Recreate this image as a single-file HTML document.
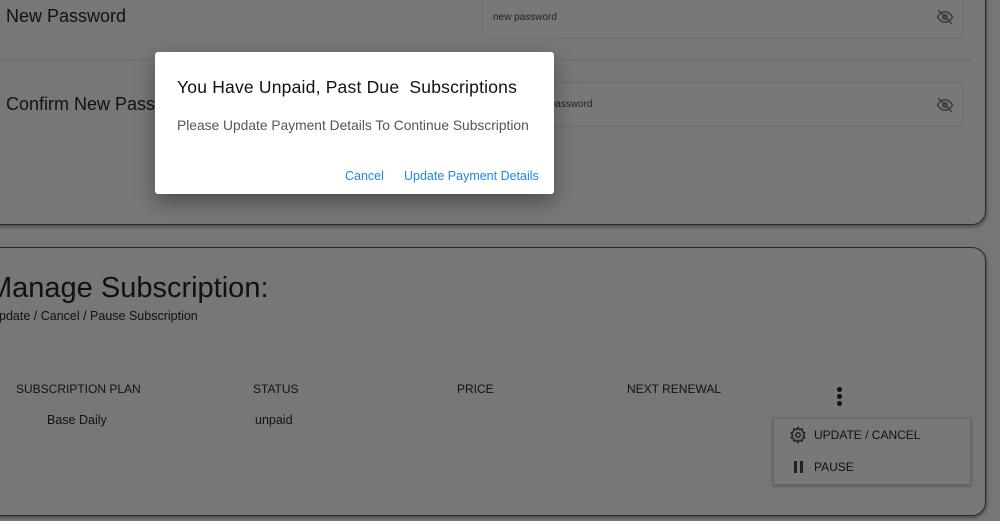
<html><head><style>
body{margin:0;width:1000px;height:521px;background:#767676;position:relative;overflow:hidden;font-family:"Liberation Sans",sans-serif;color:#111}
.card{position:absolute;border:1.5px solid #2a2a2a;border-radius:14px;background:#777;box-shadow:1px 2px 3px rgba(0,0,0,.35)}
.inp{position:absolute;border:1px solid #6e6e6e;border-radius:8px;background:#787878;font-size:10px;color:#222}
.t{position:absolute;white-space:nowrap}
.c{font-size:12px}
</style></head><body>
<div class="card" style="left:-20px;top:-20px;width:1004px;height:243px"></div>
<div class="t" style="left:6px;top:6px;font-size:18px">New Password</div>
<div class="inp" style="left:482px;top:-10px;width:480px;height:47px"><span class="t" style="left:10px;top:21px">new password</span></div>
<div style="position:absolute;left:0;top:59px;width:970px;height:1px;background:#6c6c6c"></div>
<div class="t" style="left:6px;top:94px;font-size:18px">Confirm New Password</div>
<div class="inp" style="left:482px;top:82px;width:480px;height:43px"><span class="t" style="left:10px;top:16px">confirm new password</span></div>
<svg style="position:absolute;left:936px;top:8px" width="18" height="18" viewBox="0 0 24 24" fill="none" stroke="#3a3a3a" stroke-width="2"><path d="M2 12s4-7 10-7 10 7 10 7-4 7-10 7S2 12 2 12z"/><circle cx="12" cy="12" r="3"/><path d="M3 3l18 18"/></svg>
<svg style="position:absolute;left:936px;top:96px" width="18" height="18" viewBox="0 0 24 24" fill="none" stroke="#3a3a3a" stroke-width="2"><path d="M2 12s4-7 10-7 10 7 10 7-4 7-10 7S2 12 2 12z"/><circle cx="12" cy="12" r="3"/><path d="M3 3l18 18"/></svg>

<div class="card" style="left:-20px;top:247px;width:1004px;height:267px"></div>
<div class="t" style="left:-12px;top:272px;font-size:29px">Manage Subscription:</div>
<div class="t" style="left:-10px;top:309px;font-size:12.5px">Update / Cancel / Pause Subscription</div>
<div class="t c" style="left:16px;top:382px">SUBSCRIPTION PLAN</div>
<div class="t c" style="left:253px;top:382px">STATUS</div>
<div class="t c" style="left:457px;top:382px">PRICE</div>
<div class="t c" style="left:627px;top:382px">NEXT RENEWAL</div>
<div class="t" style="left:47px;top:413px;font-size:12.5px">Base Daily</div>
<div class="t" style="left:255px;top:413px;font-size:12.5px">unpaid</div>
<div style="position:absolute;left:837px;top:387px;width:5px;height:5px;border-radius:50%;background:#111;box-shadow:0 7px 0 #111,0 14px 0 #111"></div>
<div style="position:absolute;left:773px;top:418px;width:196px;height:65px;border:1px solid #666;background:#787878;box-shadow:0 1px 3px rgba(0,0,0,.3)"></div>
<svg style="position:absolute;left:789px;top:426px" width="18" height="18" viewBox="0 0 24 24" fill="none" stroke="#222" stroke-width="2"><circle cx="12" cy="12" r="3"/><path d="M12 2l2 3 3.5-1 .5 3.5 3 2-2 3 2 3-3 1-.5 3.5-3.5-1-2 3-2-3-3.5 1-.5-3.5-3-1 2-3-2-3 3-2 .5-3.5 3.5 1z"/></svg>
<div class="t c" style="left:814px;top:428px">UPDATE / CANCEL</div>
<div style="position:absolute;left:794px;top:461px;width:3px;height:12px;background:#222;box-shadow:6px 0 0 #222"></div>
<div class="t c" style="left:814px;top:460px">PAUSE</div>

<div style="position:absolute;left:155px;top:52px;width:399px;height:142px;background:#fff;border-radius:3px;box-shadow:0 8px 20px rgba(0,0,0,.35)">
<div class="t" style="left:22px;top:25px;font-size:17.5px;color:#111;letter-spacing:0.2px">You Have Unpaid, Past Due&nbsp; Subscriptions</div>
<div class="t" style="left:22px;top:66px;font-size:13.8px;color:#555">Please Update Payment Details To Continue Subscription</div>
<div class="t" style="left:190px;top:117px;font-size:12.5px;color:#1e88e5">Cancel</div>
<div class="t" style="left:249px;top:117px;font-size:12.5px;color:#1e88e5">Update Payment Details</div>
</div>
</body></html>
